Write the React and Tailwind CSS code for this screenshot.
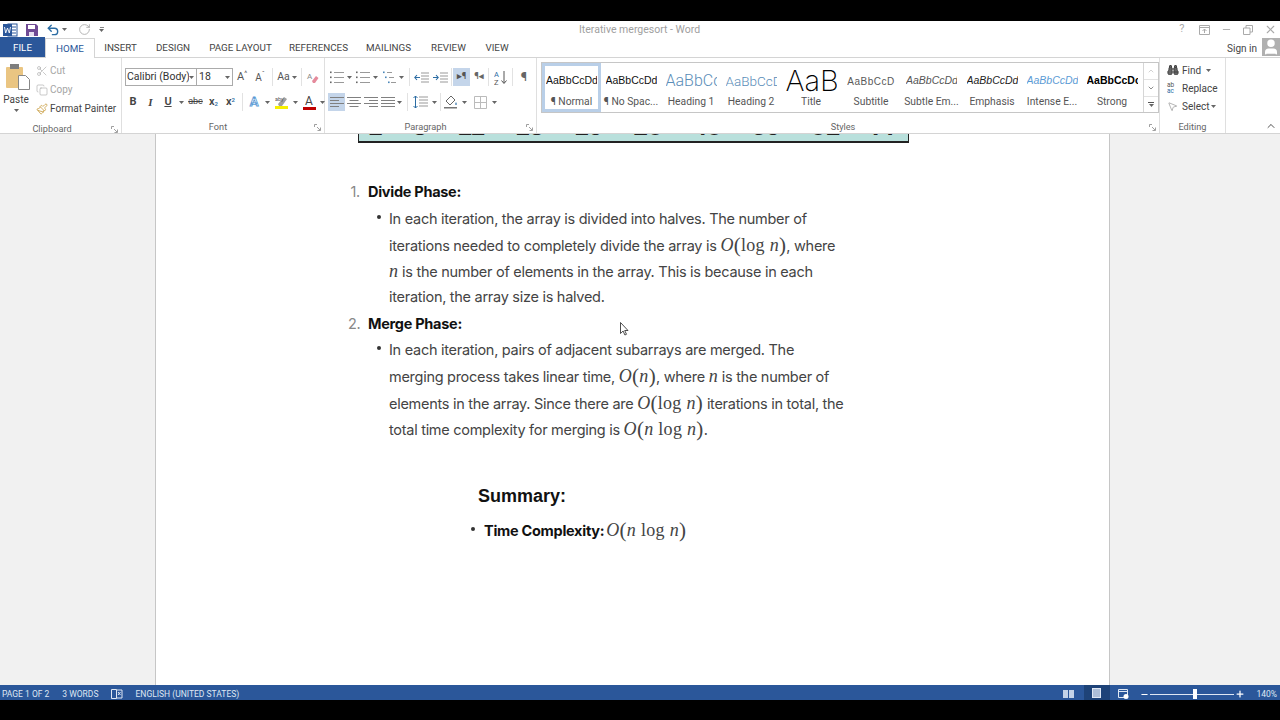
import React from 'react';
import { Scissors, Copy, Paintbrush, Binoculars, MousePointer2, ChevronUp, ChevronDown, Minus, X, Plus, Undo2, RotateCw, User } from 'lucide-react';

const ui = "font-['Roboto',sans-serif]";
const doc = "font-['Inter',sans-serif]";

const Caret = ({ className = '' }) => (
  <svg width="5" height="3" viewBox="0 0 5 3" className={`shrink-0 ${className}`}>
    <path d="M0 0h5L2.5 3z" fill="#666" />
  </svg>
);

const Launcher = () => (
  <svg width="7" height="7" viewBox="0 0 7 7" className="shrink-0">
    <path d="M.5 3V.5H3M3 3l3 3M6.5 3.5v3h-3" stroke="#888" fill="none" strokeWidth="0.8" />
  </svg>
);

const Sep = ({ className = '' }) => <div className={`w-px h-[18px] bg-[#e2e2e2] shrink-0 ${className}`} />;

const Lines = ({ kind }) => {
  const rows = {
    left: [[1, 14], [1, 9], [1, 14], [1, 9]],
    center: [[1, 14], [3.5, 9], [1, 14], [3.5, 9]],
    right: [[1, 14], [6, 9], [1, 14], [6, 9]],
    justify: [[1, 14], [1, 14], [1, 14], [1, 14]],
  }[kind];
  return (
    <svg width="15" height="12" viewBox="0 0 15 12">
      {rows.map(([x, w], i) => (
        <rect key={i} x={x} y={1 + i * 3} width={w} height="1" fill="#808080" />
      ))}
    </svg>
  );
};

const ListIcon = ({ type }) => (
  <svg width="15" height="13" viewBox="0 0 15 13">
    {[1, 6, 11].map((y) => (
      <g key={y}>
        <rect x={type === 'multi' ? (y === 1 ? 6 : y === 6 ? 8 : 10) : 5} y={y} width={type === 'multi' ? 5 : 10} height="1" fill="#999" />
        <rect x={type === 'multi' ? (y === 1 ? 2 : y === 6 ? 4 : 7) : 1} y={y - 0.5} width="1.6" height="1.6" fill={type === 'multi' ? '#4a86b8' : '#666'} />
      </g>
    ))}
  </svg>
);

const Indent = ({ dir }) => (
  <svg width="15" height="11" viewBox="0 0 15 11">
    {[0, 3, 6, 9].map((y) => (
      <rect key={y} x="7" y={y + 0.5} width="8" height="1" fill="#999" />
    ))}
    <path d={dir === 'out' ? 'M6 5.5H1M3 3L.8 5.5 3 8' : 'M0 5.5h5M3 3l2.2 2.5L3 8'} stroke="#2b6ca3" strokeWidth="1.1" fill="none" />
  </svg>
);

const Tool = ({ w = 'w-[17px]', active = false, children }) => (
  <div className={`${w} h-[18px] flex items-center justify-center shrink-0 ${active ? 'bg-[#c4d5ea]' : ''}`}>{children}</div>
);

function GroupLabel({ children, launcher = true, className = '' }) {
  return (
    <div className="h-[17px] pt-[5px] flex items-center shrink-0">
      <div className={`flex-1 text-center text-[9.2px] text-[#666] ${className}`}>{children}</div>
      {launcher && (
        <div className="mr-[3px]">
          <Launcher />
        </div>
      )}
    </div>
  );
}

function Clipboard() {
  return (
    <div className="w-[122px] shrink-0 border-r border-[#dfdfdf] flex flex-col">
      <div className="flex-1 flex">
        <div className="w-[32px] flex flex-col items-center pt-[5px]">
          <svg width="26" height="28" viewBox="0 0 26 28" className="ml-[4px]">
            <rect x="1" y="4" width="17" height="21" rx="1" fill="#eac582" />
            <rect x="5" y="1" width="9" height="5" fill="#7e7e7e" />
            <path d="M13.5 12.5h7l4 4v10h-11z" fill="#fff" stroke="#888" />
          </svg>
          <div className="text-[10px] text-[#444] mt-[2px] leading-[14px]">Paste</div>
          <Caret className="mt-[2px]" />
        </div>
        <div className="flex flex-col pl-[4px] pt-[3px] text-[10px]">
          <div className="h-[19px] flex items-center gap-[1px] text-[#a5a5a5]">
            <Scissors size={12} strokeWidth={1.2} color="#a5a5a5" />
            <span className="ml-[1px]">Cut</span>
          </div>
          <div className="h-[19px] flex items-center gap-[1px] text-[#a5a5a5]">
            <Copy size={12} strokeWidth={1.2} color="#a5a5a5" />
            <span className="ml-[1px]">Copy</span>
          </div>
          <div className="h-[19px] flex items-center gap-[1px] text-[#444] whitespace-nowrap">
            <Paintbrush size={12} strokeWidth={1.6} color="#c79a3c" />
            <span className="ml-[1px]">Format Painter</span>
          </div>
        </div>
      </div>
      <GroupLabel className="pr-[7px]">Clipboard</GroupLabel>
    </div>
  );
}

function FontGroup() {
  return (
    <div className="w-[203px] shrink-0 border-r border-[#dfdfdf] flex flex-col">
      <div className="flex-1 pl-[3px] pt-[10px]">
        <div className="flex items-center h-[18px]">
          <div className="w-[72px] h-[18px] border border-[#ababab] flex items-center px-[1px] text-[10.5px] text-[#333] whitespace-nowrap overflow-hidden">
            <span className="w-[62px] overflow-hidden">Calibri (Body)</span>
            <Caret />
          </div>
          <div className="w-[36px] h-[18px] border border-l-0 border-[#ababab] flex items-center justify-between px-[2px] text-[10.5px] text-[#333]">
            18
            <Caret />
          </div>
          <div className="w-[18px] text-center text-[11px] text-[#555]">A<sup className="text-[7px] text-[#555]">^</sup></div>
          <div className="w-[18px] text-center text-[10px] text-[#555]">A<sup className="text-[7px] text-[#555]">ˇ</sup></div>
          <Sep className="ml-[3px]" />
          <div className="w-[28px] flex items-center justify-center gap-[2px] text-[10.5px] text-[#555]">
            Aa
            <Caret />
          </div>
          <Sep />
          <Tool w="w-[21px]">
            <svg width="13" height="13" viewBox="0 0 13 13">
              <text x="1" y="8" fontSize="8" fill="#888">A</text>
              <path d="M6 10l4-5 2.5 2-3.5 5H7z" fill="#e58a9c" />
            </svg>
          </Tool>
        </div>
        <div className="flex items-center h-[18px] mt-[7px] text-[#444]">
          <Tool w="w-[16px]"><span className="text-[11px] font-bold">B</span></Tool>
          <Tool w="w-[19px]"><span className="text-[11px] italic font-bold font-['Liberation_Serif',serif]">I</span></Tool>
          <Tool w="w-[16px]"><span className="text-[11px] font-semibold underline">U</span></Tool>
          <Tool w="w-[10px]"><Caret /></Tool>
          <Tool w="w-[19px]"><span className="text-[9px] line-through">abc</span></Tool>
          <Tool w="w-[17px]"><span className="text-[11px] font-semibold">x<sub className="text-[6px] text-[#2b6ca3]">2</sub></span></Tool>
          <Tool w="w-[17px]"><span className="text-[11px] font-semibold">x<sup className="text-[6px] text-[#2b6ca3]">2</sup></span></Tool>
          <Sep className="ml-[3px]" />
          <Tool w="w-[22px]"><span className="text-[13px] text-white [-webkit-text-stroke:0.8px_#5b9bd5] font-bold">A</span></Tool>
          <Tool w="w-[5px]"><Caret /></Tool>
          <Tool w="w-[23px]">
            <svg width="14" height="14" viewBox="0 0 14 14">
              <path d="M3 9l6-7 3 2-5 7H4z" fill="#a0a0a0" />
              <text x="0" y="6" fontSize="5.5" fill="#555">aby</text>
              <rect x="0" y="11" width="13" height="3" fill="#f7f000" />
            </svg>
          </Tool>
          <Tool w="w-[5px]"><Caret /></Tool>
          <Tool w="w-[22px]">
            <div className="flex flex-col items-center leading-none">
              <span className="text-[12px] leading-[12px] text-[#444]">A</span>
              <span className="w-[13px] h-[3px] bg-[#c00000]" />
            </div>
          </Tool>
          <Tool w="w-[5px]"><Caret /></Tool>
        </div>
      </div>
      <GroupLabel>Font</GroupLabel>
    </div>
  );
}

function Paragraph() {
  return (
    <div className="w-[212px] shrink-0 border-r border-[#dfdfdf] flex flex-col">
      <div className="flex-1 pl-[3px] pt-[10px]">
        <div className="flex items-center h-[18px]">
          <Tool><ListIcon type="bullet" /></Tool>
          <Tool w="w-[8px]"><Caret /></Tool>
          <Tool w="w-[19px]"><ListIcon type="num" /></Tool>
          <Tool w="w-[7px]"><Caret /></Tool>
          <Tool w="w-[18px]"><ListIcon type="multi" /></Tool>
          <Tool w="w-[8px]"><Caret /></Tool>
          <Sep className="ml-[4px]" />
          <Tool w="w-[19px] ml-[2px]"><Indent dir="out" /></Tool>
          <Tool w="w-[18px]"><Indent dir="in" /></Tool>
          <Sep className="ml-[2px]" />
          <Tool active w="w-[17px] ml-[1px]"><span className="text-[9px] font-bold text-[#555]">▸¶</span></Tool>
          <Tool w="w-[18px]"><span className="text-[9px] font-bold text-[#666]">¶◂</span></Tool>
          <Sep />
          <Tool w="w-[23px]">
            <svg width="14" height="15" viewBox="0 0 14 15">
              <text x="0" y="7" fontSize="7.5" fill="#2b6ca3">A</text>
              <text x="0" y="14.5" fontSize="7.5" fill="#555">Z</text>
              <path d="M10 1v12M7.5 10.5L10 13.5l2.5-3" stroke="#555" fill="none" />
            </svg>
          </Tool>
          <Sep />
          <Tool w="w-[22px]"><span className="text-[13px] text-[#666]">¶</span></Tool>
        </div>
        <div className="flex items-center h-[18px] mt-[7px]">
          <Tool active><Lines kind="left" /></Tool>
          <Tool><Lines kind="center" /></Tool>
          <Tool><Lines kind="right" /></Tool>
          <Tool><Lines kind="justify" /></Tool>
          <Tool w="w-[7px]"><Caret /></Tool>
          <Sep className="ml-[4px]" />
          <Tool w="w-[22px] ml-[1px]">
            <svg width="15" height="14" viewBox="0 0 15 14">
              <path d="M2.5 1v12M.5 3l2-2 2 2M.5 11l2 2 2-2" stroke="#2b6ca3" fill="none" />
              <path d="M6 2h9M6 5h9M6 8h9M6 11h9" stroke="#999" />
            </svg>
          </Tool>
          <Tool w="w-[6px]"><Caret /></Tool>
          <Sep className="ml-[3px]" />
          <Tool w="w-[20px]">
            <svg width="14" height="14" viewBox="0 0 14 14">
              <path d="M2 6l5-5 4 4-5 5z" fill="none" stroke="#666" />
              <path d="M12 7c1 2 1 3 0 3s-1-1 0-3z" fill="#2b6ca3" />
              <rect x="0" y="12" width="13" height="1.5" fill="#777" />
            </svg>
          </Tool>
          <Tool w="w-[7px]"><Caret /></Tool>
          <Tool w="w-[22px] ml-[1px]">
            <svg width="13" height="13" viewBox="0 0 13 13">
              <path d="M.5.5h12v12H.5zM6.5.5v12M.5 6.5h12" stroke="#bbb" fill="none" />
            </svg>
          </Tool>
          <Tool w="w-[6px]"><Caret /></Tool>
        </div>
      </div>
      <GroupLabel>Paragraph</GroupLabel>
    </div>
  );
}

const sans = "font-['Liberation_Sans',sans-serif]";

const styles = [
  { w: 'w-[59px]', label: '¶ Normal', sample: 'AaBbCcDd', cls: `${sans} text-[10.5px] text-[#111]`, active: true },
  { w: 'w-[60px]', label: '¶ No Spac...', sample: 'AaBbCcDd', cls: `${sans} text-[10.5px] text-[#111]` },
  { w: 'w-[60px]', label: 'Heading 1', sample: 'AaBbCc', cls: "font-['Roboto',sans-serif] font-light text-[16px] text-[#5a8db8]" },
  { w: 'w-[60px]', label: 'Heading 2', sample: 'AaBbCcD', cls: "font-['Roboto',sans-serif] font-light text-[13.5px] text-[#5a8db8]" },
  { w: 'w-[60px]', label: 'Title', sample: 'AaBl', cls: "font-['Inter',sans-serif] font-extralight text-[29px] text-black" },
  { w: 'w-[60px]', label: 'Subtitle', sample: 'AaBbCcD', cls: `${sans} text-[10px] tracking-[0.5px] text-[#595959]` },
  { w: 'w-[61px]', label: 'Subtle Em...', sample: 'AaBbCcDd', cls: `${sans} text-[10.5px] italic text-[#555]` },
  { w: 'w-[60px]', label: 'Emphasis', sample: 'AaBbCcDd', cls: `${sans} text-[10.5px] italic text-[#222]` },
  { w: 'w-[60px]', label: 'Intense E...', sample: 'AaBbCcDd', cls: `${sans} text-[10.5px] italic text-[#5b9bd5]` },
  { w: 'w-[60px]', label: 'Strong', sample: 'AaBbCcDc', cls: `${sans} text-[10.5px] font-bold text-black` },
];

function Styles() {
  return (
    <div className="w-[623px] shrink-0 border-r border-[#dfdfdf] flex flex-col">
      <div className="flex-1 pl-[4px] pt-[4px]">
        <div className="w-[618px] h-[51px] border border-[#c6c6c6] flex">
          <div className="flex-1 flex overflow-hidden">
            {styles.map((s) => (
              <div
                key={s.label}
                className={`${s.w} shrink-0 h-full flex flex-col items-center overflow-hidden ${s.active ? 'border-[3px] border-[#b9cfe8]' : 'pt-[3px] px-[3px]'}`}
              >
                <div className={`h-[30px] flex items-center whitespace-nowrap overflow-hidden max-w-[51px] ${s.cls}`}>{s.sample}</div>
                <div className="mt-[-1px] text-[10.3px] leading-[14px] text-[#555] whitespace-nowrap">{s.label}</div>
              </div>
            ))}
          </div>
          <div className="w-[15px] shrink-0 border-l border-[#d6d6d6] flex flex-col">
            <div className="h-[17px] flex items-center justify-center border-b border-[#e2e2e2]">
              <ChevronUp size={8} color="#bbb" />
            </div>
            <div className="h-[17px] flex items-center justify-center border-b border-[#e2e2e2]">
              <ChevronDown size={8} color="#555" />
            </div>
            <div className="flex-1 flex flex-col items-center justify-center gap-[1px]">
              <div className="w-[6px] h-px bg-[#555]" />
              <Caret />
            </div>
          </div>
        </div>
      </div>
      <GroupLabel>Styles</GroupLabel>
    </div>
  );
}

function Editing() {
  return (
    <div className="w-[66px] shrink-0 border-r border-[#dfdfdf] flex flex-col">
      <div className="flex-1 pl-[7px] pt-[3px] text-[10px] text-[#444]">
        <div className="h-[18px] flex items-center whitespace-nowrap">
          <span className="w-[15px]"><Binoculars size={12} color="#444" fill="#666" /></span>
          Find
          <Caret className="ml-[5px]" />
        </div>
        <div className="h-[18px] flex items-center whitespace-nowrap">
          <span className="w-[15px] flex flex-col text-[6.5px] leading-[6px]">
            <span className="text-[#555]">ab</span>
            <span className="text-[#2b6ca3]">ac</span>
          </span>
          Replace
        </div>
        <div className="h-[18px] flex items-center whitespace-nowrap">
          <span className="w-[15px]"><MousePointer2 size={11} strokeWidth={1.2} color="#777" /></span>
          Select
          <Caret className="ml-[2px]" />
        </div>
      </div>
      <GroupLabel launcher={false}>Editing</GroupLabel>
    </div>
  );
}

const M = ({ children }) => <span className="font-['Liberation_Serif',serif] text-[18px] text-[#444] tracking-[0.3px]">{children}</span>;
const I = ({ children }) => <i className="italic">{children}</i>;
const Big = ({ children }) => <span className="text-[21px] font-light align-[-1px]">{children}</span>;

const Line = ({ children }) => <div className="h-[26.3px] leading-[26.3px] whitespace-nowrap">{children}</div>;

function Numbered({ n, title }) {
  return (
    <div className="flex h-[26.3px] leading-[26.3px] text-[14.5px] tracking-[-0.28px]">
      <div className="w-[20px] ml-[-10px] text-[#888] text-right pr-[8px]">{n}.</div>
      <div className="font-bold text-[#111]">{title}</div>
    </div>
  );
}

function Bullets({ children }) {
  return (
    <div className="flex text-[14.5px] tracking-[-0.28px] text-[#444]">
      <div className="w-[31px] pl-[19px]">
        <div className="w-[4px] h-[4px] rounded-full bg-[#333] mt-[9px]" />
      </div>
      <div>{children}</div>
    </div>
  );
}

const digits = ['1', '3', '11', '13', '19', '28', '48', '59', '81', '77'];

export default function App() {
  return (
    <div className={`w-[1280px] h-[720px] bg-black flex flex-col overflow-hidden ${ui}`}>
      <div className="h-[21px] shrink-0" />
      {/* title bar */}
      <div className="h-[17px] shrink-0 bg-white flex items-center">
        <div className="w-[3px]" />
        <svg width="15" height="14" viewBox="0 0 15 14" className="shrink-0">
          <rect x="5" y="1" width="9" height="12" fill="#fff" stroke="#2b579a" />
          <path d="M8 4h5M8 7h5M8 10h5" stroke="#2b579a" />
          <rect x="0" y="1" width="9" height="12" fill="#2b579a" />
          <path d="M1.5 4l1.2 6 1.8-5 1.8 5 1.2-6" stroke="#fff" fill="none" strokeWidth="0.9" />
        </svg>
        <svg width="12" height="12" viewBox="0 0 12 12" className="ml-[8px] shrink-0">
          <path d="M0 0h10l2 2v10H0z" fill="#6f4a94" />
          <rect x="2" y="1" width="7" height="4" fill="#fff" />
          <rect x="3" y="8" width="5" height="4" fill="#e6dff0" />
        </svg>
        <div className="ml-[8px]"><Undo2 size={14} color="#2b6ca3" strokeWidth={2.4} /></div>
        <Caret className="ml-[2px]" />
        <div className="ml-[11px]"><RotateCw size={13} color="#aaa" strokeWidth={1.6} /></div>
        <div className="ml-[8px] flex flex-col items-center gap-[1px]">
          <div className="w-[4px] h-px bg-[#888]" />
          <Caret />
        </div>
        <div className="ml-[475px] w-[120px] text-center text-[10.5px] text-[#a0a0a0] whitespace-nowrap">Iterative mergesort - Word</div>
        <div className="flex-1" />
        <div className="text-[11px] text-[#aaa]">?</div>
        <svg width="11" height="10" viewBox="0 0 11 10" className="ml-[14px]">
          <path d="M.5.5h10v9H.5zM.5 2.5h10M5.5 8V4M3.5 6l2-2 2 2" stroke="#aaa" fill="none" />
        </svg>
        <div className="ml-[11px]"><Minus size={11} color="#aaa" /></div>
        <svg width="10" height="10" viewBox="0 0 10 10" className="ml-[11.5px]">
          <path d="M.5 3h6.5v6.500H.5zM3 3V.5h6.500V7H7" stroke="#aaa" fill="none" />
        </svg>
        <div className="ml-[10.5px] mr-[3.5px]"><X size={13} color="#aaa" /></div>
      </div>
      {/* tabs */}
      <div className="h-[20px] shrink-0 bg-white flex items-end border-b border-[#d4d4d4] text-[9.8px] text-[#444] relative z-10">
        <div className="w-[45px] h-[20px] bg-[#2b579a] text-white flex items-center justify-center pt-[2px]">FILE</div>
        <div className="w-[50px] h-[20px] mb-[-1px] bg-white border border-b-0 border-[#d4d4d4] text-[#2b579a] flex items-center justify-center pt-[2px]">HOME</div>
        <div className="h-[20px] flex items-center whitespace-nowrap text-center pt-[2px]">
          <span className="w-[51px]">INSERT</span>
          <span className="w-[54px]">DESIGN</span>
          <span className="w-[81px]">PAGE LAYOUT</span>
          <span className="w-[75px]">REFERENCES</span>
          <span className="w-[65px]">MAILINGS</span>
          <span className="w-[55px]">REVIEW</span>
          <span className="w-[42px]">VIEW</span>
        </div>
        <div className="flex-1" />
        <div className="h-[20px] flex items-center pt-[2px] text-[10px]">Sign in</div>
        <div className="w-[18px] h-[18px] ml-[5px] mb-[1px] bg-[#b0b0b0] flex items-end justify-center overflow-hidden">
          <User size={18} color="#fff" fill="#fff" />
        </div>
      </div>
      {/* ribbon */}
      <div className="h-[76px] shrink-0 bg-white flex border-b border-[#d4d4d4] relative z-10">
        <Clipboard />
        <FontGroup />
        <Paragraph />
        <Styles />
        <Editing />
        <div className="flex-1 flex items-end justify-end pr-[3px] pb-[1px]">
          <ChevronUp size={12} color="#555" />
        </div>
      </div>
      {/* document */}
      <div className="flex-1 min-h-0 bg-[#f1f1f1] flex overflow-hidden">
        <div className={`w-[955px] ml-[155px] bg-white border-x border-[#c6c6c6] pl-[202px] ${doc} relative`}>
          <div className="w-[551px] h-[9px] bg-[#b9e0dc] border-x border-b-2 border-[#222] flex items-end justify-between px-[9px] overflow-hidden">
            {digits.map((d) => (
              <span key={d} className="font-['Liberation_Sans',sans-serif] font-bold text-[26px] leading-[26px] mb-[2px] shrink-0 text-[#222]">{d}</span>
            ))}
          </div>
          <div className="mt-[36.3px]">
            <Numbered n="1" title="Divide Phase:" />
            <Bullets>
              <Line>In each iteration, the array is divided into halves. The number of</Line>
              <Line>iterations needed to completely divide the array is <M><I>O</I><Big>(</Big>log <I>n</I><Big>)</Big></M>, where</Line>
              <Line><M><I>n</I></M> is the number of elements in the array. This is because in each</Line>
              <Line>iteration, the array size is halved.</Line>
            </Bullets>
            <Numbered n="2" title="Merge Phase:" />
            <Bullets>
              <Line>In each iteration, pairs of adjacent subarrays are merged. The</Line>
              <Line>merging process takes linear time, <M><I>O</I><Big>(</Big><I>n</I><Big>)</Big></M>, where <M><I>n</I></M> is the number of</Line>
              <Line>elements in the array. Since there are <M><I>O</I><Big>(</Big>log <I>n</I><Big>)</Big></M> iterations in total, the</Line>
              <Line>total time complexity for merging is <M><I>O</I><Big>(</Big><I>n</I> log <I>n</I><Big>)</Big></M>.</Line>
            </Bullets>
          </div>
          <div className="ml-[120px] mt-[40.7px] font-['Liberation_Sans',sans-serif] font-bold text-[18px] leading-[26px] text-[#111]">Summary:</div>
          <div className="ml-[113px] mt-[9px] flex items-center h-[26px] text-[14.5px] tracking-[-0.28px] whitespace-nowrap">
            <div className="w-[4px] h-[4px] rounded-full bg-[#333] mr-[9px] mb-[4px]" />
            <span className="font-bold text-[#111]">Time Complexity:</span>
            <span className="ml-[2px]"><M><I>O</I><Big>(</Big><I>n</I> log <I>n</I><Big>)</Big></M></span>
          </div>
          {/* mouse pointer over the page */}
          <svg width="9" height="14" viewBox="0 0 9 14" className="absolute left-[464px] top-[188px]">
            <path d="M.5.5v11l2.600-2.500 1.800 4 1.600-.7-1.800-3.800H8z" fill="#fff" stroke="#222" strokeWidth="0.8" />
          </svg>
        </div>
      </div>
      {/* status bar */}
      <div className="h-[15px] shrink-0 bg-[#2b579a] text-[#dfe7f3] text-[8.5px] flex items-center pt-[3px]">
        <span className="ml-[2px]">PAGE 1 OF 2</span>
        <span className="ml-[13px]">3 WORDS</span>
        <svg width="12" height="10" viewBox="0 0 12 10" className="ml-[13px]">
          <path d="M.5.5h5v9h-5zM5.500 1h5.500v8H5.500M7 3l2.500 3M9.500 3L7 6" stroke="#dfe7f3" fill="none" />
        </svg>
        <span className="ml-[12px]">ENGLISH (UNITED STATES)</span>
        <div className="flex-1" />
        <svg width="11" height="10" viewBox="0 0 11 10" className="mr-[9.5px]">
          <path d="M0 1h5v8H0zM6 1h5v8H6z" fill="#c4d3e8" />
        </svg>
        <div className="w-[26px] h-[15px] mt-[-3px] bg-[#1e4378] flex items-center justify-center">
          <div className="w-[9px] h-[10px] bg-[#aebfd8] border border-[#dfe7f3]" />
        </div>
        <svg width="11" height="10" viewBox="0 0 11 10" className="ml-[8.5px]">
          <path d="M.5.5h9v8h-9zM.5 2.500h9" stroke="#dfe7f3" fill="none" />
          <circle cx="8" cy="7.500" r="2.500" fill="#fff" />
        </svg>
        <div className="ml-[11px]"><Minus size={9} color="#fff" strokeWidth={3} /></div>
        <div className="w-[84px] h-px bg-[#dfe7f3] ml-[1px] flex items-center justify-center">
          <div className="w-[4px] h-[10px] bg-white ml-[6px]" />
        </div>
        <div className="ml-[1px]"><Plus size={10} color="#fff" strokeWidth={3} /></div>
        <span className="w-[35px] text-right pr-[3px]">140%</span>
      </div>
      <div className="h-[20px] shrink-0" />
    </div>
  );
}
